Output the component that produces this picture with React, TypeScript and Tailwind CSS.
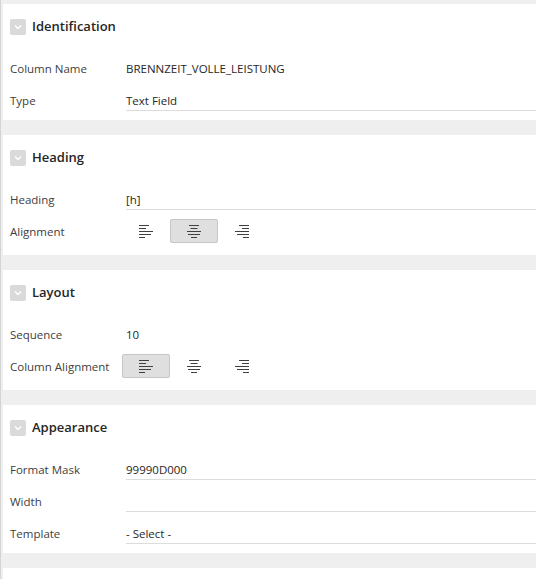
import React from 'react';

type Align = 'left' | 'center' | 'right';

interface Row {
  label: string;
  value?: string;
  kind: 'text' | 'display' | 'align';
  align?: Align;
}

interface Section {
  title: string;
  rows: Row[];
}

const sections: Section[] = [
  {
    title: 'Identification',
    rows: [
      { label: 'Column Name', value: 'BRENNZEIT_VOLLE_LEISTUNG', kind: 'display' },
      { label: 'Type', value: 'Text Field', kind: 'text' },
    ],
  },
  {
    title: 'Heading',
    rows: [
      { label: 'Heading', value: '[h]', kind: 'text' },
      { label: 'Alignment', kind: 'align', align: 'center' },
    ],
  },
  {
    title: 'Layout',
    rows: [
      { label: 'Sequence', value: '10', kind: 'display' },
      { label: 'Column Alignment', kind: 'align', align: 'left' },
    ],
  },
  {
    title: 'Appearance',
    rows: [
      { label: 'Format Mask', value: '99990D000', kind: 'text' },
      { label: 'Width', value: '', kind: 'text' },
      { label: 'Template', value: '- Select -', kind: 'text' },
    ],
  },
];

// line widths for the 5-bar alignment glyphs
const bars = [10, 7, 14, 12, 6];

function AlignIcon({ type }: { type: Align }) {
  return (
    <svg width="14" height="15" viewBox="0 0 14 15" className="text-[#404040]">
      {bars.map((w, i) => {
        const x = type === 'left' ? 0 : type === 'right' ? 14 - w : (14 - w) / 2;
        return <rect key={i} x={x} y={1 + i * 3} width={w} height="1" fill="currentColor" />;
      })}
    </svg>
  );
}

function Chevron() {
  return (
    <span className="flex h-4 w-4 items-center justify-center rounded-[2px] bg-[#dadada]">
      <svg width="10" height="10" viewBox="0 0 10 10">
        <path d="M2 3.5 L5 6.5 L8 3.5" fill="none" stroke="#ffffff" strokeWidth="1.4" />
      </svg>
    </span>
  );
}

function FieldRow({ row }: { row: Row }) {
  if (row.kind === 'align') {
    return (
      <div className="flex h-9">
        <div className="flex h-8 w-[123px] shrink-0 items-center pl-[7px] pt-[2px] text-[#404040]">
          {row.label}
        </div>
        <div className="-ml-[4px] flex items-start pt-1">
          {(['left', 'center', 'right'] as Align[]).map((a) => (
            <div
              key={a}
              className={`flex h-6 w-12 items-center justify-center rounded-[2px] border ${
                row.align === a ? 'border-[#c6c6c6] bg-[#dfdfdf]' : 'border-transparent'
              }`}
            >
              <AlignIcon type={a} />
            </div>
          ))}
        </div>
      </div>
    );
  }
  return (
    <div className="flex h-8">
      <div className="flex w-[123px] shrink-0 items-center pl-[7px] pt-[2px] text-[#404040]">
        {row.label}
      </div>
      <div
        className={`h-[27px] flex-1 pt-[9px] leading-4 text-[#262626] ${
          row.kind === 'text' ? 'border-b border-[#dcdcdc]' : ''
        }`}
      >
        {row.value}
      </div>
    </div>
  );
}

export default function App() {
  return (
    <div
      className="min-h-[579px] border-l border-[#d4d4d4] bg-[#efefef] pt-1 text-[11.5px]"
      style={{ fontFamily: '"Open Sans", "Noto Sans", sans-serif' }}
    >
      <div className="ml-[2px] flex flex-col gap-[15px]">
        {sections.map((s) => (
          <div key={s.title} className="bg-white pb-1">
            <div className="flex h-12 items-center gap-[6px] pb-[2px] pl-[7px]">
              <Chevron />
              <span className="text-[13px] font-semibold text-[#262626]">{s.title}</span>
            </div>
            {s.rows.map((r) => (
              <FieldRow key={r.label} row={r} />
            ))}
          </div>
        ))}
        <div className="h-3 bg-white" />
      </div>
    </div>
  );
}
